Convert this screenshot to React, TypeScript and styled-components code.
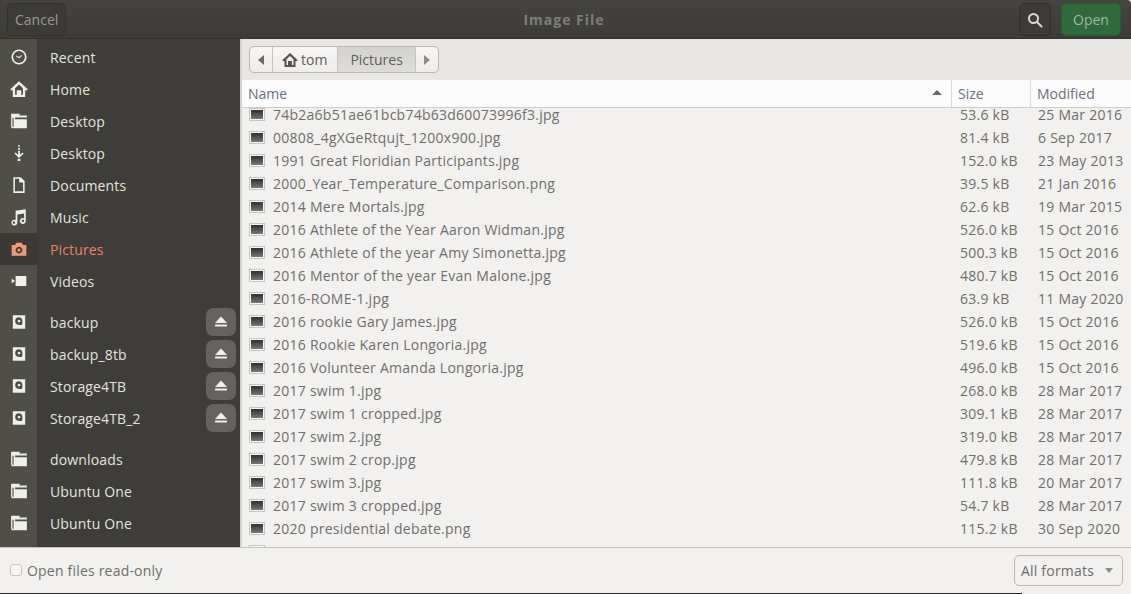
import styled, { createGlobalStyle } from "styled-components";

const Global = createGlobalStyle`
  html, body { margin: 0; padding: 0; background: #f2f1f0; }
  * { box-sizing: border-box; }
`;

const Window = styled.div`
  width: 1131px;
  height: 594px;
  display: flex;
  flex-direction: column;
  overflow: hidden;
  font-family: "Open Sans", "Noto Sans", sans-serif;
  font-size: 14px;
  background: #f2f1f0;
`;

const HeaderBar = styled.header`
  height: 39px;
  flex: none;
  display: grid;
  grid-template-columns: 1fr auto 1fr;
  align-items: center;
  padding: 1px 10px 0 7px;
  background: linear-gradient(#45443f, #3c3b37);
  border-bottom: 1px solid #33322e;
  border-top-right-radius: 4px;
`;

const HeadGroup = styled.div`
  display: flex;
  justify-content: flex-end;
  gap: 10px;
`;

const HeadButton = styled.div<{ $green?: boolean }>`
  width: ${(p) => (p.$green ? "60px" : "auto")};
  height: 33px;
  display: flex;
  align-items: center;
  justify-content: center;
  justify-self: start;
  border-radius: 5px;
  color: ${(p) => (p.$green ? "#a1b5a1" : "#9b9a94")};
  background: ${(p) => (p.$green ? "#2f6b3a" : "#3c3b37")};
  border: 1px solid ${(p) => (p.$green ? "#2a5c34" : "#33322e")};
  padding: 0 7px;
`;

const Title = styled.div`
  text-align: center;
  font-weight: 700;
  letter-spacing: 1px;
  color: #7f7e79;
`;

const SearchButton = styled(HeadButton)`
  width: 32px;
  padding: 0;
`;

const Body = styled.div`
  flex: 1;
  display: flex;
  min-height: 0;
`;

const Sidebar = styled.nav`
  width: 240px;
  flex: none;
  padding-top: 2px;
  background: linear-gradient(to right, #4f4f47 37px, #3e3d39 37px);
  overflow: hidden;
  letter-spacing: 0.15px;
`;

const Group = styled.div`
  padding-bottom: 9px;
`;

const Place = styled.div<{ $active?: boolean }>`
  height: 32px;
  display: flex;
  align-items: center;
  color: ${(p) => (p.$active ? "#e9865f" : "#e4e3df")};
  background: ${(p) => (p.$active ? "linear-gradient(to right, #3a3935 37px, #3e3d39 37px)" : "transparent")};
`;

const PlaceIcon = styled.span<{ $active?: boolean }>`
  width: 37px;
  flex: none;
  display: flex;
  justify-content: center;
  color: ${(p) => (p.$active ? "#ee9a78" : "#f0efeb")};
`;

const PlaceLabel = styled.span`
  flex: 1;
  padding-left: 13px;
`;

const Eject = styled.span`
  width: 30px;
  height: 28px;
  margin-right: 4px;
  display: flex;
  align-items: center;
  justify-content: center;
  border-radius: 7px;
  background: #64635e;
  color: #f0efeb;
`;

const Main = styled.main`
  flex: 1;
  min-width: 0;
  display: flex;
  flex-direction: column;
  border-left: 2px solid #d5d3cf;
`;

const PathBar = styled.div`
  height: 41px;
  flex: none;
  display: flex;
  align-items: center;
  padding: 0 7px;
  background: #e8e7e5;
`;

const Crumbs = styled.div`
  height: 27px;
  display: flex;
  border: 1px solid #b9b7b2;
  border-radius: 5px;
  overflow: hidden;
  background: linear-gradient(#f7f6f5, #efedeb);
  color: #5f5e5a;
`;

const Crumb = styled.div<{ $on?: boolean; $pad?: number }>`
  display: flex;
  align-items: center;
  gap: 3px;
  padding: 0 ${(p) => (p.$pad ?? 8)}px;
  border-left: 1px solid #c6c4bf;
  background: ${(p) => (p.$on ? "linear-gradient(#d5d3cf, #dedcd9)" : "transparent")};
  &:first-child { border-left: none; }
`;

const CrumbHome = styled.svg`
  width: 16px;
  height: 16px;
  margin-left: -1px;
  fill: #55544f;
`;

const ColumnHeads = styled.div`
  height: 28px;
  flex: none;
  display: grid;
  grid-template-columns: 710px 79px 1fr;
  background: #fcfcfc;
  border-bottom: 1px solid #d0cecb;
  color: #68717c;
`;

const ColumnHead = styled.div`
  display: flex;
  align-items: center;
  justify-content: space-between;
  padding: 0 9px 1px 6px;
  border-right: 1px solid #dcdad7;
  &:last-child { border-right: none; }
`;

const SortArrow = styled.span`
  width: 0;
  height: 0;
  margin-bottom: 1px;
  border-left: 5px solid transparent;
  border-right: 5px solid transparent;
  border-bottom: 5px solid #6b6a66;
`;

const List = styled.div`
  flex: 1;
  min-height: 0;
  overflow: hidden;
  background: #f2f1f0;
  color: #6f6e69;
  letter-spacing: 0.25px;
`;

const Row = styled.div`
  height: 23px;
  display: grid;
  grid-template-columns: 710px 79px 1fr;
  align-items: center;
  line-height: 12px;
  white-space: nowrap;
  &:first-child { margin-top: -5px; }
`;

const NameCell = styled.div`
  display: flex;
  align-items: center;
  padding-left: 7px;
  gap: 8px;
`;

const SizeCell = styled.div`
  padding-left: 8px;
`;

const DateCell = styled.div`
  padding-left: 7px;
`;

const Thumb = styled.span`
  width: 16px;
  height: 13px;
  flex: none;
  border: 1px solid #c6c5c1;
  background: #f7f7f6;
  padding: 1px;
  display: block;
  &::before {
    content: "";
    display: block;
    width: 100%;
    height: 100%;
    background: linear-gradient(#2f2f2f, #777);
  }
`;

const Footer = styled.footer`
  height: 46px;
  flex: none;
  display: flex;
  align-items: center;
  justify-content: space-between;
  padding: 0 8px 1px 10px;
  border-top: 1px solid #c4c2be;
  background: #f2f1f0;
  color: #6f6e69;
  letter-spacing: 0.2px;
`;

const BottomEdge = styled.div`
  width: 1022px;
  height: 1px;
  flex: none;
  background: #2a2a28;
`;

const CheckLabel = styled.label`
  display: flex;
  align-items: center;
  gap: 5px;
`;

const CheckBox = styled.span`
  width: 12px;
  height: 12px;
  border: 1px solid #c9c7c3;
  border-radius: 2px;
  background: #f7f6f5;
`;

const FormatSelect = styled.div`
  width: 109px;
  height: 31px;
  display: flex;
  align-items: center;
  justify-content: space-between;
  padding: 0 9px 0 6px;
  border: 1px solid #bab8b3;
  border-radius: 5px;
  background: #f2f1f0;
`;

const DownArrow = styled.span`
  width: 0;
  height: 0;
  border-left: 4px solid transparent;
  border-right: 4px solid transparent;
  border-top: 5px solid #8d8c88;
`;

const homePath =
  "M8 1L.5 8v1h2v6h11V9h2V8zM8 4l3.500 3.300V13H10V9H6v4H4.500V7.300z";

type IconName = "clock" | "home" | "folder" | "down" | "doc" | "music" | "camera" | "video" | "disk";

function Icon({ name }: { name: IconName }) {
  return (
    <svg width="18" height="18" viewBox="0 0 16 16" fill="currentColor">
      {name === "clock" && (
        <>
          <circle cx="8" cy="8" r="6" fill="none" stroke="currentColor" strokeWidth="1.5" />
          <path d="M5.600 7l2.400 1.600L10.400 6.600" fill="none" stroke="currentColor" strokeWidth="1" />
        </>
      )}
      {name === "home" && <path d={homePath} fillRule="evenodd" />}
      {name === "folder" && <path d="M1 1.500h7.500v1.500H15v1.800H4.500V6.500H15v8H2.500A1.500 1.500 0 0 1 1 13zM2.200 5v8h1V5z" fillRule="evenodd" />}
      {name === "down" && <path d="M7.200 1h1.600v1.500H7.200zM7.200 3.500h1.600v1.500H7.200zM7.200 6h1.600v3.500l2.300-2 1 1L8 12.500 3.900 8.500l1-1 2.300 2zM6.800 13.200h2.400v1.800H6.800z" />}
      {name === "doc" && <path d="M3 1h6.500L13 4.500V15H3zM4.400 2.400v11.200h7.200V5.800H8.200V2.400z" fillRule="evenodd" />}
      {name === "music" && <path d="M5 2.500L14 1v10.500a2.600 2.600 0 1 1-1.500-2.300V4.800L6.500 5.800v7.200a2.600 2.600 0 1 1-1.500-2.300zM3.500 11.800a1.100 1.100 0 1 0 .01 0zM11.500 10.300a1.100 1.100 0 1 0 .01 0z" fillRule="evenodd" />}
      {name === "camera" && <path d="M5.500 2.500h5l1 2h3v9.500h-13V4.500h3zM8 6a3 3 0 1 0 .01 0zM8 7.600a1.400 1.400 0 1 1-.01 0z" fillRule="evenodd" />}
      {name === "video" && <path d="M5 3.500h9.500v9H5zM1.500 6L4 7.500v1L1.500 10z" />}
      {name === "disk" && <path d="M2.500 2h11v12h-11zM8 3.800a3.400 3.400 0 1 0 0 6.800h2.300l.700-.800V7.200a3.400 3.400 0 0 0-3-3.400zM8 6a1.200 1.200 0 1 1-.01 0z" fillRule="evenodd" />}
    </svg>
  );
}

const mainPlaces: [IconName, string][] = [
  ["clock", "Recent"],
  ["home", "Home"],
  ["folder", "Desktop"],
  ["down", "Desktop"],
  ["doc", "Documents"],
  ["music", "Music"],
  ["camera", "Pictures"],
  ["video", "Videos"],
];

const drives = ["backup", "backup_8tb", "Storage4TB", "Storage4TB_2"];
const folders = ["downloads", "Ubuntu One", "Ubuntu One"];

const files = [
  ["74b2a6b51ae61bcb74b63d60073996f3.jpg", "53.6 kB", "25 Mar 2016"],
  ["00808_4gXGeRtqujt_1200x900.jpg", "81.4 kB", "6 Sep 2017"],
  ["1991 Great Floridian Participants.jpg", "152.0 kB", "23 May 2013"],
  ["2000_Year_Temperature_Comparison.png", "39.5 kB", "21 Jan 2016"],
  ["2014 Mere Mortals.jpg", "62.6 kB", "19 Mar 2015"],
  ["2016 Athlete of the Year Aaron Widman.jpg", "526.0 kB", "15 Oct 2016"],
  ["2016 Athlete of the year Amy Simonetta.jpg", "500.3 kB", "15 Oct 2016"],
  ["2016 Mentor of the year Evan Malone.jpg", "480.7 kB", "15 Oct 2016"],
  ["2016-ROME-1.jpg", "63.9 kB", "11 May 2020"],
  ["2016 rookie Gary James.jpg", "526.0 kB", "15 Oct 2016"],
  ["2016 Rookie Karen Longoria.jpg", "519.6 kB", "15 Oct 2016"],
  ["2016 Volunteer Amanda Longoria.jpg", "496.0 kB", "15 Oct 2016"],
  ["2017 swim 1.jpg", "268.0 kB", "28 Mar 2017"],
  ["2017 swim 1 cropped.jpg", "309.1 kB", "28 Mar 2017"],
  ["2017 swim 2.jpg", "319.0 kB", "28 Mar 2017"],
  ["2017 swim 2 crop.jpg", "479.8 kB", "28 Mar 2017"],
  ["2017 swim 3.jpg", "111.8 kB", "20 Mar 2017"],
  ["2017 swim 3 cropped.jpg", "54.7 kB", "28 Mar 2017"],
  ["2020 presidential debate.png", "115.2 kB", "30 Sep 2020"],
  ["", "", ""],
];

export default function App() {
  return (
    <Window>
      <Global />
      <HeaderBar>
        <HeadButton>Cancel</HeadButton>
        <Title>Image File</Title>
        <HeadGroup>
          <SearchButton>
            <svg width="16" height="16" viewBox="0 0 16 16" fill="none" stroke="#d8d7d3" strokeWidth="2">
              <circle cx="6.500" cy="6.500" r="4.500" />
              <path d="M10 10l4.500 4.500" strokeLinecap="round" />
            </svg>
          </SearchButton>
          <HeadButton $green>Open</HeadButton>
        </HeadGroup>
      </HeaderBar>
      <Body>
        <Sidebar>
          <Group>
            {mainPlaces.map(([icon, label]) => (
              <Place key={label + icon} $active={label === "Pictures"}>
                <PlaceIcon $active={label === "Pictures"}>
                  <Icon name={icon} />
                </PlaceIcon>
                <PlaceLabel>{label}</PlaceLabel>
              </Place>
            ))}
          </Group>
          <Group>
            {drives.map((label) => (
              <Place key={label}>
                <PlaceIcon>
                  <Icon name="disk" />
                </PlaceIcon>
                <PlaceLabel>{label}</PlaceLabel>
                <Eject>
                  <svg width="14" height="14" viewBox="0 0 14 14" fill="currentColor">
                    <path d="M7 1.500L13 8H1zM1 9.500h12v2H1z" />
                  </svg>
                </Eject>
              </Place>
            ))}
          </Group>
          <Group>
            {folders.map((label, i) => (
              <Place key={label + i}>
                <PlaceIcon>
                  <Icon name="folder" />
                </PlaceIcon>
                <PlaceLabel>{label}</PlaceLabel>
              </Place>
            ))}
          </Group>
        </Sidebar>
        <Main>
          <PathBar>
            <Crumbs>
              <Crumb>
                <svg width="6" height="10" viewBox="0 0 6 10" fill="#6b6a66"><path d="M6 0v10L0 5z" /></svg>
              </Crumb>
              <Crumb $pad={10}>
                <CrumbHome viewBox="0 0 16 16">
                  <path d={homePath} fillRule="evenodd" />
                </CrumbHome>
                tom
              </Crumb>
              <Crumb $on $pad={12}>Pictures</Crumb>
              <Crumb>
                <svg width="6" height="10" viewBox="0 0 6 10" fill="#8d8c88"><path d="M0 0v10l6-5z" /></svg>
              </Crumb>
            </Crumbs>
          </PathBar>
          <ColumnHeads>
            <ColumnHead>Name<SortArrow /></ColumnHead>
            <ColumnHead>Size</ColumnHead>
            <ColumnHead>Modified</ColumnHead>
          </ColumnHeads>
          <List>
            {files.map(([name, size, date], i) => (
              <Row key={i}>
                <NameCell><Thumb />{name}</NameCell>
                <SizeCell>{size}</SizeCell>
                <DateCell>{date}</DateCell>
              </Row>
            ))}
          </List>
        </Main>
      </Body>
      <Footer>
        <CheckLabel><CheckBox />Open files read-only</CheckLabel>
        <FormatSelect>All formats<DownArrow /></FormatSelect>
      </Footer>
      <BottomEdge />
    </Window>
  );
}
